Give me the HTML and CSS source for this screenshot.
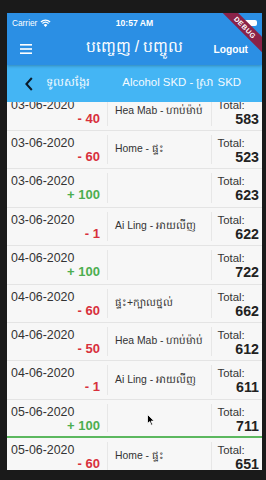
FILE: index.html
```html
<!DOCTYPE html>
<html lang="km">
<head>
<meta charset="utf-8">
<title>បញ្ចេញ / បញ្ចូល</title>
<link rel="stylesheet" href="styles.css">
</head>
<body>
<div class="screen">
  <header class="topbar">
    <div class="status">
      <span class="carrier">Carrier
        <svg class="wifi" width="11" height="8" viewBox="0 0 11 8"><path d="M5.5 8 L3.6 5.9 A2.8 2.8 0 0 1 7.4 5.9 Z" fill="#fff"/><path d="M2.4 4.6 A4.6 4.6 0 0 1 8.6 4.6" stroke="#fff" stroke-width="1.3" fill="none"/><path d="M0.9 3 A6.8 6.8 0 0 1 10.1 3" stroke="#fff" stroke-width="1.3" fill="none"/></svg>
      </span>
      <span class="time">10:57 AM</span>
      <span class="battery"></span>
    </div>
    <div class="appbar">
      <span class="menu"><svg width="12" height="10" viewBox="0 0 12 10"><rect y="0" width="12" height="1.6" fill="#fff"/><rect y="4.2" width="12" height="1.6" fill="#fff"/><rect y="8.4" width="12" height="1.6" fill="#fff"/></svg></span>
      <h1 class="title">បញ្ចេញ / បញ្ចូល</h1>
      <span class="logout">Logout</span>
    </div>
  </header>
  <nav class="subbar">
    <svg class="chev" width="8" height="14" viewBox="0 0 8 14"><path d="M6.8 1 L1.4 7 L6.8 13" stroke="#0b1c2c" stroke-width="2" fill="none"/></svg>
    <span class="sub-left">ទូលសង្កែរ</span>
    <span class="sub-right">Alcohol SKD - ស្រា SKD</span>
  </nav>
  <main class="list">
    <div class="list-inner">
      <div class="row"><div class="c1"><span class="date">03-06-2020</span><span class="amt neg">- 40</span></div><i class="vd"></i><div class="c2">Hea Mab - ហាប់ម៉ាប់</div><i class="vd"></i><div class="c3"><span class="lbl">Total:</span><span class="tot">583</span></div></div>
      <div class="row"><div class="c1"><span class="date">03-06-2020</span><span class="amt neg">- 60</span></div><i class="vd"></i><div class="c2">Home - ផ្ទះ</div><i class="vd"></i><div class="c3"><span class="lbl">Total:</span><span class="tot">523</span></div></div>
      <div class="row"><div class="c1"><span class="date">03-06-2020</span><span class="amt pos">+ 100</span></div><i class="vd"></i><div class="c2"></div><i class="vd"></i><div class="c3"><span class="lbl">Total:</span><span class="tot">623</span></div></div>
      <div class="row"><div class="c1"><span class="date">03-06-2020</span><span class="amt neg">- 1</span></div><i class="vd"></i><div class="c2">Ai Ling - អាយលីញ</div><i class="vd"></i><div class="c3"><span class="lbl">Total:</span><span class="tot">622</span></div></div>
      <div class="row"><div class="c1"><span class="date">04-06-2020</span><span class="amt pos">+ 100</span></div><i class="vd"></i><div class="c2"></div><i class="vd"></i><div class="c3"><span class="lbl">Total:</span><span class="tot">722</span></div></div>
      <div class="row"><div class="c1"><span class="date">04-06-2020</span><span class="amt neg">- 60</span></div><i class="vd"></i><div class="c2">ផ្ទះ+ក្បាលថ្នល់</div><i class="vd"></i><div class="c3"><span class="lbl">Total:</span><span class="tot">662</span></div></div>
      <div class="row"><div class="c1"><span class="date">04-06-2020</span><span class="amt neg">- 50</span></div><i class="vd"></i><div class="c2">Hea Mab - ហាប់ម៉ាប់</div><i class="vd"></i><div class="c3"><span class="lbl">Total:</span><span class="tot">612</span></div></div>
      <div class="row"><div class="c1"><span class="date">04-06-2020</span><span class="amt neg">- 1</span></div><i class="vd"></i><div class="c2">Ai Ling - អាយលីញ</div><i class="vd"></i><div class="c3"><span class="lbl">Total:</span><span class="tot">611</span></div></div>
      <div class="row row-last-before"><div class="c1"><span class="date">05-06-2020</span><span class="amt pos">+ 100</span></div><i class="vd"></i><div class="c2"></div><i class="vd"></i><div class="c3"><span class="lbl">Total:</span><span class="tot">711</span></div></div>
      <div class="row"><div class="c1"><span class="date">05-06-2020</span><span class="amt neg">- 60</span></div><i class="vd"></i><div class="c2">Home - ផ្ទះ</div><i class="vd"></i><div class="c3"><span class="lbl">Total:</span><span class="tot">651</span></div></div>
    </div>
  </main>
  <div class="debug">DEBUG</div>
  <svg class="cursor" width="8" height="12" viewBox="0 0 8 12"><path d="M0.5 0.5 L0.5 9.5 L2.7 7.6 L4.2 11.2 L5.6 10.6 L4.1 7.1 L7.2 7.1 Z" fill="#000" stroke="#fff" stroke-width="0.8"/></svg>
</div>
</body>
</html>
```
FILE: styles.css
```css
html, body {
  margin: 0;
  padding: 0;
  background: #1a1a1a;
}
body {
  width: 266px;
  height: 480px;
  overflow: hidden;
  font-family: "Liberation Sans", Arial, "Noto Sans", sans-serif;
}
.screen {
  position: relative;
  margin: 13px 0 0 7px;
  width: 255px;
  height: 457px;
  overflow: hidden;
  background: #f6f6f6;
  display: flex;
  flex-direction: column;
}
.topbar {
  background: #2b8fe4;
  color: #fff;
  position: relative;
  z-index: 2;
  box-shadow: 0 1px 3px rgba(0,0,0,0.25);
}
.status {
  height: 20px;
  display: grid;
  grid-template-columns: 1fr auto 1fr;
  align-items: center;
  font-size: 8.3px;
}
.carrier {
  padding-left: 5px;
  display: flex;
  align-items: center;
  gap: 3px;
}
.time {
  font-weight: bold;
  font-size: 8.6px;
}
.battery {
  justify-self: end;
  margin-right: 5px;
  width: 14px;
  height: 6px;
  border-radius: 2px;
  background: #fff;
}
.appbar {
  height: 32px;
  display: grid;
  grid-template-columns: 1fr auto 1fr;
  align-items: center;
}
.menu {
  padding-left: 13px;
  display: flex;
}
.title {
  margin: 0 0 2px;
  font-weight: normal;
  font-size: 15.6px;
}
.logout {
  justify-self: end;
  padding-right: 14px;
  font-size: 10.2px;
  font-weight: bold;
}
.subbar {
  height: 37px;
  background: #44b5f4;
  display: flex;
  align-items: center;
  padding-left: 18px;
  padding-right: 21px;
  color: #f4fbff;
  font-size: 11.4px;
}
.chev {
  margin-right: 13px;
}
.sub-right {
  margin-left: auto;
}
.list {
  flex: 1;
  overflow: hidden;
}
.list-inner {
  margin-top: -9.4px;
}
.row {
  height: 38.4px;
  box-sizing: border-box;
  border-bottom: 1px solid #e4e4e4;
  display: grid;
  grid-template-columns: 100px 1px 102.5px 1px 1fr;
  background: #f7f7f7;
}
.vd {
  background: #e7e7e7;
  margin: 4px 0;
}
.c1, .c3 {
  display: flex;
  flex-direction: column;
  padding-top: 5px;
}
.c1 {
  padding-left: 4px;
  padding-right: 7px;
}
.date {
  font-size: 12.4px;
  line-height: 14px;
  color: #333;
}
.amt {
  align-self: flex-end;
  font-size: 13px;
  font-weight: bold;
  line-height: 13px;
}
.neg { color: #d8303c; }
.pos { color: #4cae50; }
.c2 {
  padding-left: 7px;
  display: flex;
  align-items: center;
  font-size: 10.4px;
  color: #333;
}
.c3 {
  padding-left: 6px;
  padding-right: 3px;
}
.lbl {
  font-size: 11.4px;
  line-height: 14px;
  color: #333;
}
.tot {
  align-self: flex-end;
  font-size: 14.2px;
  font-weight: bold;
  line-height: 14px;
  color: #222;
}
.row-last-before {
  border-bottom: 2px solid #5cb85f;
}
.debug {
  position: absolute;
  z-index: 5;
  top: 14px;
  left: 238px;
  width: 90px;
  height: 11px;
  margin: -5.5px 0 0 -45px;
  transform: rotate(45deg);
  background: #8a2248;
  color: #fff;
  font-size: 7px;
  font-weight: bold;
  letter-spacing: 0.5px;
  line-height: 11px;
  text-align: center;
}
.cursor {
  position: absolute;
  z-index: 6;
  left: 140px;
  top: 401px;
}
```
